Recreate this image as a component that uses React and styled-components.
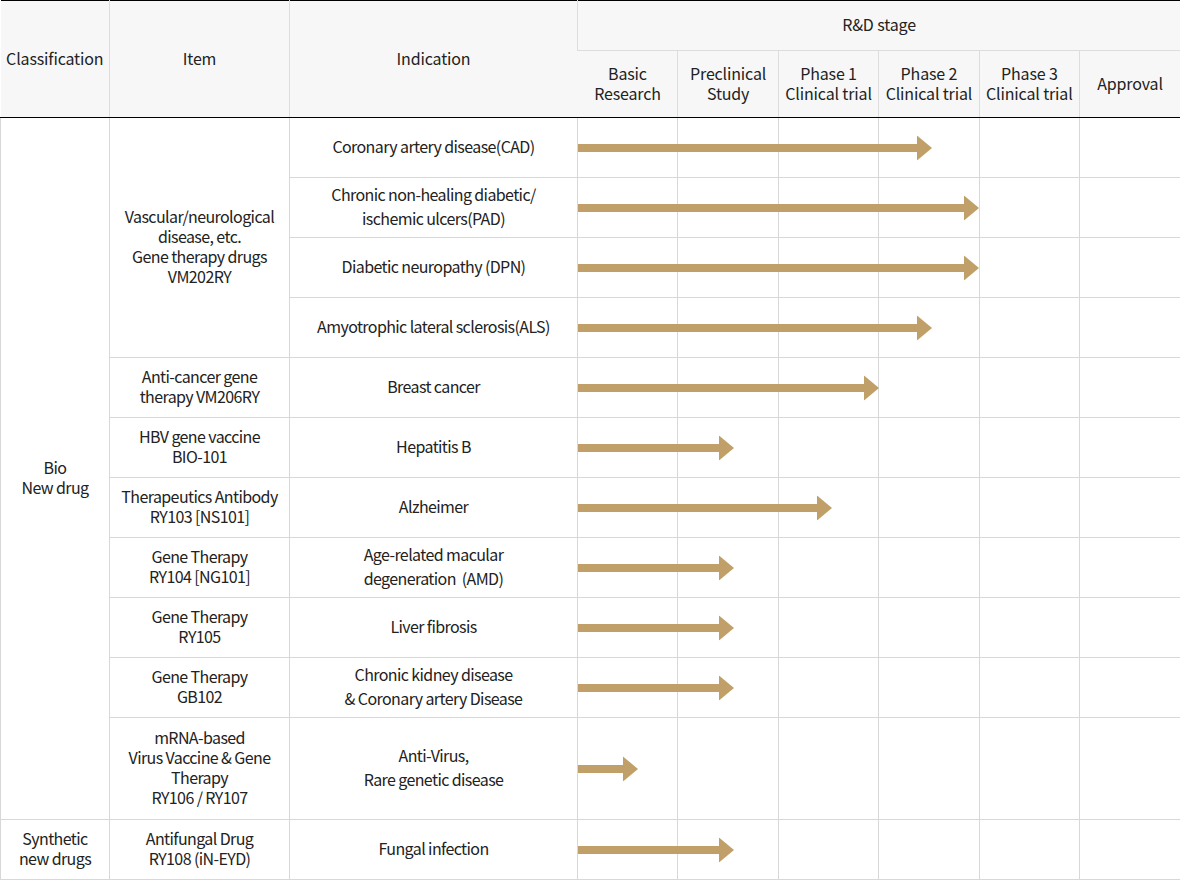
import React from "react";
import styled, { createGlobalStyle } from "styled-components";

const GlobalStyle = createGlobalStyle`
  html, body {
    margin: 0;
    padding: 0;
    background: #fff;
  }
  body {
    font-family: "Noto Sans CJK KR", "Noto Sans", sans-serif;
    color: #222;
  }
`;

const Table = styled.table`
  width: 1180px;
  table-layout: fixed;
  border-collapse: collapse;
  border-top: 1px solid #000;
  border-bottom: 1px solid #000;
  font-size: 16px;
`;

const Body = styled.tbody`
  border-top: 1px solid #000;
`;

const HeadCell = styled.th`
  background: #f7f7f7;
  font-weight: 400;
  line-height: 20px;
  letter-spacing: -0.15px;
  text-align: center;
  vertical-align: middle;
  padding: 0 4px 3px;
  height: ${({ $height }) => $height}px;
  border-left: 1px solid #ddd;
  border-bottom: 1px solid ${({ $last }) => ($last ? "#000" : "#ddd")};
  &:first-child {
    border-left: none;
  }
`;

const Cell = styled.td`
  text-align: center;
  vertical-align: middle;
  letter-spacing: -0.6px;
  line-height: ${({ $loose }) => ($loose ? 24 : 20)}px;
  padding: ${({ $span }) => ($span ? "17px 6px 0" : "0 6px 3px")};
  height: ${({ $height }) => $height || 56}px;
  border: 1px solid #d8d8d8;
  border-top: none;
  &:last-child {
    border-right: none;
  }
`;

const StageCell = styled(Cell)`
  position: relative;
  padding: 0;
`;

const ArrowBox = styled.svg`
  position: absolute;
  left: 0;
  top: 50%;
  transform: translateY(-50%);
  z-index: 1;
  display: block;
`;

const Arrow = ({ length }) => (
  <ArrowBox width={length} height="25" viewBox={`0 0 ${length} 25`}>
    <rect x="0" y="8.5" width={length - 14} height="8" fill="#c0a068" />
    <polygon
      points={`${length - 15},0 ${length},12.5 ${length - 15},25`}
      fill="#c0a068"
    />
  </ArrowBox>
);

const stages = [
  ["Basic", "Research"],
  ["Preclinical", "Study"],
  ["Phase 1", "Clinical trial"],
  ["Phase 2", "Clinical trial"],
  ["Phase 3", "Clinical trial"],
  ["Approval"],
];

const rows = [
  { cls: "bio", item: "vm202", ind: ["Coronary artery disease(CAD)"], arrow: 354 },
  { ind: ["Chronic non-healing diabetic/", "ischemic ulcers(PAD)"], arrow: 401 },
  { ind: ["Diabetic neuropathy (DPN)"], arrow: 401 },
  { ind: ["Amyotrophic lateral sclerosis(ALS)"], arrow: 354 },
  { item: ["Anti-cancer gene", "therapy VM206RY"], ind: ["Breast cancer"], arrow: 301 },
  { item: ["HBV gene vaccine", "BIO-101"], ind: ["Hepatitis B"], arrow: 156 },
  { item: ["Therapeutics Antibody", "RY103 [NS101]"], ind: ["Alzheimer"], arrow: 254 },
  { item: ["Gene Therapy", "RY104 [NG101]"], ind: ["Age-related macular", "degeneration\u00a0 (AMD)"], arrow: 156 },
  { item: ["Gene Therapy", "RY105"], ind: ["Liver fibrosis"], arrow: 156 },
  { item: ["Gene Therapy", "GB102"], ind: ["Chronic kidney disease", "& Coronary artery Disease"], arrow: 156 },
  {
    item: ["mRNA-based", "Virus Vaccine & Gene", "Therapy", "RY106 / RY107"],
    ind: ["Anti-Virus,", "Rare genetic disease"],
    arrow: 60,
    height: 98,
  },
  {
    cls: "syn",
    item: ["Antifungal Drug", "RY108 (iN-EYD)"],
    ind: ["Fungal infection"],
    arrow: 156,
  },
];

const Lines = ({ lines }) =>
  lines.map((l, i) => (
    <React.Fragment key={i}>
      {i > 0 && <br />}
      {l}
    </React.Fragment>
  ));

const App = () => {
  return (
    <>
      <GlobalStyle />
      <Table>
        <colgroup>
          <col style={{ width: 109 }} />
          <col style={{ width: 180 }} />
          <col style={{ width: 288 }} />
          {stages.map((_, i) => (
            <col key={i} />
          ))}
        </colgroup>
        <thead>
          <tr>
            <HeadCell rowSpan={2} $last>Classification</HeadCell>
            <HeadCell rowSpan={2} $last>Item</HeadCell>
            <HeadCell rowSpan={2} $last>Indication</HeadCell>
            <HeadCell colSpan={6} $height={46}>R&amp;D stage</HeadCell>
          </tr>
          <tr>
            {stages.map((s, i) => (
              <HeadCell key={i} $height={63} $last>
                <Lines lines={s} />
              </HeadCell>
            ))}
          </tr>
        </thead>
        <Body>
          {rows.map((r, i) => (
            <tr key={i}>
              {r.cls === "bio" && (
                <Cell rowSpan={11} $span>
                  Bio
                  <br />
                  New drug
                </Cell>
              )}
              {r.cls === "syn" && (
                <Cell>
                  Synthetic
                  <br />
                  new drugs
                </Cell>
              )}
              {r.item === "vm202" && (
                <Cell rowSpan={4} $span>
                  Vascular/neurological
                  <br />
                  disease, etc.
                  <br />
                  Gene therapy drugs
                  <br />
                  VM202RY
                </Cell>
              )}
              {Array.isArray(r.item) && (
                <Cell $height={r.height}>
                  <Lines lines={r.item} />
                </Cell>
              )}
              <Cell $loose $height={r.height}>
                <Lines lines={r.ind} />
              </Cell>
              {stages.map((_, j) =>
                j === 0 ? (
                  <StageCell key={j} $height={r.height}>
                    <Arrow length={r.arrow} />
                  </StageCell>
                ) : (
                  <Cell key={j} $height={r.height} />
                )
              )}
            </tr>
          ))}
        </Body>
      </Table>
    </>
  );
};

export default App;
